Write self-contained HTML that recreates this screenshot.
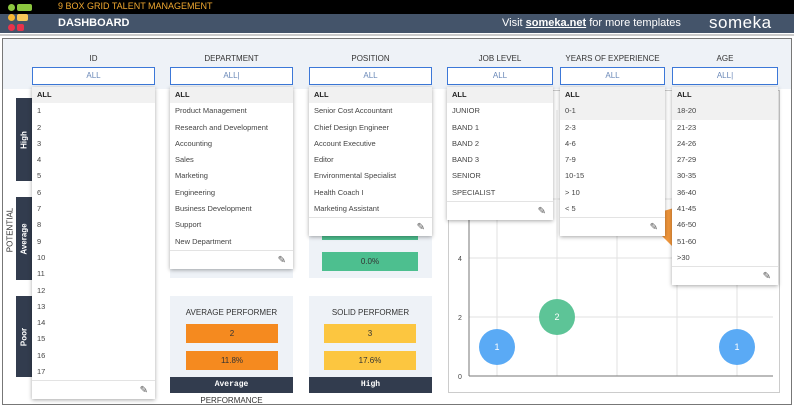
<!DOCTYPE html>
<html><head><meta charset="utf-8"><style>
*{margin:0;padding:0;box-sizing:border-box}
body{width:794px;height:407px;overflow:hidden;background:#fff;font-family:"Liberation Sans",Arial,sans-serif;position:relative}
.a{position:absolute}
.lbl{position:absolute;font-size:8px;color:#333;text-align:center}
.inp{position:absolute;height:18px;border:1.5px solid #3c78d8;background:#fff;font-size:8px;color:#6a88b8;text-align:center;line-height:15px}
.dd{position:absolute;background:#fff;box-shadow:0 1px 4px rgba(0,0,0,.35);font-size:7.5px;color:#444}
.dd div.r{height:16.3px;line-height:16.3px;padding-left:5px}
.dd div.r.s{background:#f1f1f1;font-weight:bold;color:#222}
.dd div.f{border-top:1px solid #e3e3e3;height:19px;position:relative}
.pen{position:absolute;right:7px;top:4px;font-size:10px;color:#555}
.vb{position:absolute;left:16px;width:16px;background:#323c4e}
.vb span{position:absolute;left:50%;top:50%;transform:translate(-50%,-50%) rotate(-90deg);color:#fff;font-size:8px;font-weight:bold}
.box{position:absolute;font-size:8px;text-align:center;line-height:19px;color:#333}
.bar{position:absolute;background:#323c4e;color:#fff;font-size:8px;font-weight:bold;text-align:center;line-height:16px;font-family:"Liberation Mono",monospace}
</style></head><body>
<div class="a" style="left:0;top:0;width:794px;height:14px;background:#000"></div>
<div class="a" style="left:58px;top:1px;font-size:9px;color:#f0a830">9 BOX GRID TALENT MANAGEMENT</div>
<div class="a" style="left:0;top:14px;width:794px;height:19px;background:#44546a"></div>
<div class="a" style="left:58px;top:17px;font-size:11px;color:#fff;font-weight:bold">DASHBOARD</div>
<div class="a" style="left:8px;top:4px;width:7px;height:7px;border-radius:50%;background:#8cc63f"></div>
<div class="a" style="left:17px;top:4px;width:15px;height:7px;border-radius:2px;background:#8cc63f"></div>
<div class="a" style="left:8px;top:14px;width:7px;height:7px;border-radius:50%;background:#f7b733"></div>
<div class="a" style="left:17px;top:14px;width:11px;height:7px;border-radius:2px;background:#f7c85a"></div>
<div class="a" style="left:8px;top:24px;width:7px;height:7px;border-radius:50%;background:#e8334a"></div>
<div class="a" style="left:17px;top:24px;width:7px;height:7px;border-radius:2px;background:#e8334a"></div>
<div class="a" style="left:502px;top:17px;font-size:11px;color:#fff">Visit <b style="text-decoration:underline">someka.net</b> for more templates</div>
<div class="a" style="left:709px;top:13px;font-size:17px;color:#fff;letter-spacing:.5px">someka</div>
<div class="a" style="left:0;top:34px;width:794px;height:2px;background:#ccc"></div>
<div class="a" style="left:2px;top:38px;width:790px;height:367px;border:1px solid #777"></div>
<div class="a" style="left:3px;top:39px;width:788px;height:50px;background:#eef2f7"></div>

<div class="lbl" style="left:32px;top:54px;width:123px">ID</div>
<div class="lbl" style="left:170px;top:54px;width:123px">DEPARTMENT</div>
<div class="lbl" style="left:309px;top:54px;width:123px">POSITION</div>
<div class="lbl" style="left:447px;top:54px;width:106px">JOB LEVEL</div>
<div class="lbl" style="left:560px;top:54px;width:105px">YEARS OF EXPERIENCE</div>
<div class="lbl" style="left:672px;top:54px;width:106px">AGE</div>

<div class="a" style="left:4px;top:205px;width:12px;height:50px"><span class="a" style="left:50%;top:50%;transform:translate(-50%,-50%) rotate(-90deg);font-size:8px;color:#333">POTENTIAL</span></div>
<div class="vb" style="top:98px;height:83px"><span>High</span></div>
<div class="vb" style="top:197px;height:83px"><span>Average</span></div>
<div class="vb" style="top:296px;height:81px"><span>Poor</span></div>

<div class="a" style="left:170px;top:90px;width:123px;height:188px;background:#eef2f7"></div>
<div class="a" style="left:309px;top:90px;width:123px;height:188px;background:#eef2f7"></div>
<div class="box" style="left:322px;top:228px;width:96px;height:12px;background:#4dbf8f"></div>
<div class="box" style="left:322px;top:252px;width:96px;height:19px;background:#4dbf8f">0.0%</div>

<div class="a" style="left:170px;top:296px;width:123px;height:81px;background:#eef2f7"></div>
<div class="lbl" style="left:170px;top:308px;width:123px">AVERAGE PERFORMER</div>
<div class="box" style="left:186px;top:324px;width:92px;height:19px;background:#f58a1f">2</div>
<div class="box" style="left:186px;top:351px;width:92px;height:19px;background:#f58a1f">11.8%</div>
<div class="bar" style="left:170px;top:377px;width:123px;height:16px">Average</div>
<div class="a" style="left:309px;top:296px;width:123px;height:81px;background:#eef2f7"></div>
<div class="lbl" style="left:309px;top:308px;width:123px">SOLID PERFORMER</div>
<div class="box" style="left:324px;top:324px;width:92px;height:19px;background:#fcc640">3</div>
<div class="box" style="left:324px;top:351px;width:92px;height:19px;background:#fcc640">17.6%</div>
<div class="bar" style="left:309px;top:377px;width:123px;height:16px">High</div>
<div class="lbl" style="left:170px;top:396px;width:123px">PERFORMANCE</div>

<div class="a" style="left:448px;top:90px;width:332px;height:303px;border:1px solid #ccc;background:#fff"></div>
<svg class="a" style="left:448px;top:90px" width="332" height="303">
<g stroke="#e2e2e2" stroke-width="1">
<line x1="49" y1="20" x2="49" y2="286"/><line x1="109" y1="20" x2="109" y2="286"/><line x1="169" y1="20" x2="169" y2="286"/><line x1="229" y1="20" x2="229" y2="286"/><line x1="289" y1="20" x2="289" y2="286"/>
<line x1="21" y1="168" x2="325" y2="168"/><line x1="21" y1="227" x2="325" y2="227"/><line x1="21" y1="109" x2="325" y2="109"/>
</g>
<line x1="21" y1="20" x2="21" y2="286" stroke="#777"/>
<line x1="21" y1="286" x2="325" y2="286" stroke="#777"/>
<g font-size="7" fill="#444" font-family="Liberation Sans"><text x="10" y="171">4</text><text x="10" y="230">2</text><text x="10" y="289">0</text></g>
<path d="M212 122 L226 118 L226 158 L212 144 Z" fill="#f0963c"/>
<circle cx="49" cy="257" r="18" fill="#5aaaf5"/><circle cx="109" cy="227" r="18" fill="#5dc497"/><circle cx="289" cy="257" r="18" fill="#5aaaf5"/>
<g font-size="9" fill="#fff" font-family="Liberation Sans" text-anchor="middle"><text x="49" y="260">1</text><text x="109" y="230">2</text><text x="289" y="260">1</text></g>
</svg>

<div class="inp" style="left:32px;top:67px;width:123px">ALL</div>
<div class="inp" style="left:170px;top:67px;width:123px">ALL|</div>
<div class="inp" style="left:309px;top:67px;width:123px">ALL</div>
<div class="inp" style="left:447px;top:67px;width:106px">ALL</div>
<div class="inp" style="left:560px;top:67px;width:105px">ALL</div>
<div class="inp" style="left:672px;top:67px;width:106px">ALL|</div>

<div class="dd" style="left:32px;top:87px;width:123px">
<div class="r s">ALL</div><div class="r">1</div><div class="r">2</div><div class="r">3</div><div class="r">4</div><div class="r">5</div><div class="r">6</div><div class="r">7</div><div class="r">8</div><div class="r">9</div><div class="r">10</div><div class="r">11</div><div class="r">12</div><div class="r">13</div><div class="r">14</div><div class="r">15</div><div class="r">16</div><div class="r">17</div>
<div class="f"><span class="pen">✎</span></div></div>

<div class="dd" style="left:170px;top:87px;width:123px">
<div class="r s">ALL</div><div class="r">Product Management</div><div class="r">Research and Development</div><div class="r">Accounting</div><div class="r">Sales</div><div class="r">Marketing</div><div class="r">Engineering</div><div class="r">Business Development</div><div class="r">Support</div><div class="r">New Department</div>
<div class="f"><span class="pen">✎</span></div></div>

<div class="dd" style="left:309px;top:87px;width:123px">
<div class="r s">ALL</div><div class="r">Senior Cost Accountant</div><div class="r">Chief Design Engineer</div><div class="r">Account Executive</div><div class="r">Editor</div><div class="r">Environmental Specialist</div><div class="r">Health Coach I</div><div class="r">Marketing Assistant</div>
<div class="f"><span class="pen">✎</span></div></div>

<div class="dd" style="left:447px;top:87px;width:106px">
<div class="r s">ALL</div><div class="r">JUNIOR</div><div class="r">BAND 1</div><div class="r">BAND 2</div><div class="r">BAND 3</div><div class="r">SENIOR</div><div class="r">SPECIALIST</div>
<div class="f"><span class="pen">✎</span></div></div>

<div class="dd" style="left:560px;top:87px;width:105px">
<div class="r s">ALL</div><div class="r" style="background:#f1f1f1">0-1</div><div class="r">2-3</div><div class="r">4-6</div><div class="r">7-9</div><div class="r">10-15</div><div class="r">&gt; 10</div><div class="r">&lt; 5</div>
<div class="f"><span class="pen">✎</span></div></div>

<div class="dd" style="left:672px;top:87px;width:106px">
<div class="r s">ALL</div><div class="r" style="background:#f1f1f1">18-20</div><div class="r">21-23</div><div class="r">24-26</div><div class="r">27-29</div><div class="r">30-35</div><div class="r">36-40</div><div class="r">41-45</div><div class="r">46-50</div><div class="r">51-60</div><div class="r">&gt;30</div>
<div class="f"><span class="pen">✎</span></div></div>
</body></html>
